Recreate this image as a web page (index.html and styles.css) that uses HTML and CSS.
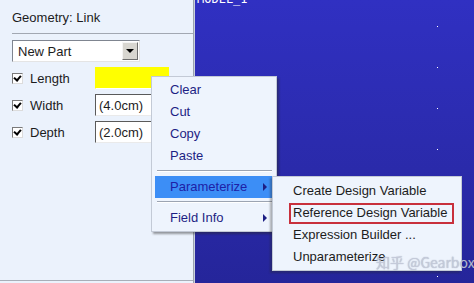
FILE: index.html
```html
<!DOCTYPE html>
<html lang="en">
<head>
   <meta charset="UTF-8">
   <meta name="viewport" content="width=device-width, initial-scale=1.0">
   <link rel="stylesheet" href="styles.css">
</head>
<body>
   <div class="window">
      <div class="panel">
         <div class="title">Geometry: Link</div>
         <div class="select">
            <span class="select-text">New Part</span>
            <span class="select-btn"><span class="down-arrow"></span></span>
         </div>
         <div class="field-row">
            <span class="check"></span>
            <span class="field-label">Length</span>
            <span class="field-input yellow"></span>
         </div>
         <div class="field-row">
            <span class="check"></span>
            <span class="field-label">Width</span>
            <span class="field-input">(4.0cm)</span>
         </div>
         <div class="field-row">
            <span class="check"></span>
            <span class="field-label">Depth</span>
            <span class="field-input">(2.0cm)</span>
         </div>
         <div class="panel-foot"></div>
      </div>
      <div class="canvas">
         <div class="model-name">MODEL_1</div>
         <span class="dot" style="top: 26px"></span>
         <span class="dot" style="top: 67px"></span>
         <span class="dot" style="top: 108px"></span>
         <span class="dot" style="top: 149px"></span>
         <span class="dot" style="top: 276px"></span>
      </div>
   </div>

   <div class="menu context-menu">
      <div class="menu-item">Clear</div>
      <div class="menu-item">Cut</div>
      <div class="menu-item">Copy</div>
      <div class="menu-item">Paste</div>
      <div class="menu-sep"></div>
      <div class="menu-item active">Parameterize <span class="sub-arrow"></span></div>
      <div class="menu-sep"></div>
      <div class="menu-item">Field Info <span class="sub-arrow"></span></div>
   </div>

   <div class="menu sub-menu">
      <div class="menu-item">Create Design Variable</div>
      <div class="menu-item marked">Reference Design Variable</div>
      <div class="menu-item">Expression Builder ...</div>
      <div class="menu-item">Unparameterize</div>
   </div>

   <div class="watermark">知乎 @Gearbox</div>
</body>
</html>
```

FILE: styles.css
```css
body {
   margin: 0;
   font-family: "Liberation Sans", Arial, sans-serif;
   font-size: 13px;
   color: #1c1c1c;
   overflow: hidden;
}
.window {
   display: flex;
   width: 474px;
   height: 283px;
}
.panel {
   width: 193px;
   background-color: #ebf2fc;
   border-right: 1px solid #9ba3b0;
   display: flex;
   flex-direction: column;
}
.title {
   height: 33px;
   line-height: 35px;
   margin-left: 12px;
   border-bottom: 1px solid #a2a8b2;
}
.select {
   display: flex;
   align-items: center;
   justify-content: space-between;
   width: 124px;
   height: 18px;
   margin: 6px 0 0 12px;
   padding: 1px;
   background-color: #fff;
   border: 1px solid #7f8590;
   border-right-color: #e4e4e4;
   border-bottom-color: #e4e4e4;
}
.select-text {
   padding-left: 4px;
}
.select-btn {
   display: flex;
   align-items: center;
   justify-content: center;
   width: 14px;
   height: 16px;
   background-color: #d8d6d0;
   border: 1px solid #f4f4f4;
   border-right-color: #6e6e6e;
   border-bottom-color: #6e6e6e;
}
.down-arrow {
   width: 0;
   height: 0;
   border-left: 4px solid transparent;
   border-right: 4px solid transparent;
   border-top: 4px solid #000;
}
.field-row {
   display: flex;
   align-items: center;
   height: 22px;
   margin-top: 5px;
   padding-left: 12px;
}
.check {
   position: relative;
   width: 9px;
   height: 9px;
   background-color: #fff;
   border: 1px solid #7a7a7a;
   border-right-color: #dcdcdc;
   border-bottom-color: #dcdcdc;
}
.check::after {
   content: "";
   position: absolute;
   left: 2px;
   top: 0px;
   width: 3px;
   height: 5px;
   border-right: 2px solid #000;
   border-bottom: 2px solid #000;
   transform: rotate(40deg);
}
.field-label {
   width: 65px;
   padding-left: 7px;
}
.field-input {
   display: flex;
   align-items: center;
   width: 69px;
   height: 20px;
   padding-left: 3px;
   background-color: #fff;
   border-top: 1px solid #5a5a5a;
   border-left: 1px solid #5a5a5a;
   border-right: 1px solid #eaeaea;
   border-bottom: 1px solid #eaeaea;
}
.field-input.yellow {
   background-color: #ffff00;
   border-color: #ffff00;
   border-bottom-color: #ffffff;
}
.panel-foot {
   margin-top: auto;
   margin-bottom: 2px;
   border-bottom: 1px solid #a8aeb8;
}
.canvas {
   flex: 1;
   position: relative;
   background: linear-gradient(#3030c2, #2a2aaa 60%, #25259a);
   border-left: 1px solid #c9d0dc;
}
.model-name {
   margin-top: -8px;
   padding-left: 2px;
   font-family: "DejaVu Sans Mono", monospace;
   font-size: 12px;
   color: #ffffff;
}
.dot {
   position: absolute;
   left: 242px;
   width: 1px;
   height: 1px;
   background-color: #ffffff;
}
.watermark {
   position: absolute;
   left: 376px;
   top: 252px;
   font-family: "Noto Sans CJK SC", sans-serif;
   font-size: 14px;
   color: rgba(200, 206, 222, 0.85);
   text-shadow: 0 0 1px rgba(90, 96, 120, 0.5);
   z-index: 3;
   white-space: nowrap;
}
.menu {
   position: absolute;
   background-color: #eef4fd;
   border: 1px solid #c3cad6;
   box-shadow: 2px 2px 2px rgba(40, 40, 40, 0.45);
   z-index: 2;
}
.context-menu {
   left: 151px;
   top: 76px;
   width: 120px;
   padding: 2px;
   color: #1d1f84;
}
.sub-menu {
   left: 272px;
   top: 176px;
   width: 188px;
   padding: 3px 0 2px 0;
   color: #1c1c1c;
   box-shadow: -2px 2px 2px rgba(40, 40, 40, 0.35);
}
.menu-item {
   position: relative;
   height: 22px;
   line-height: 22px;
   padding-left: 15px;
   margin-left: 1px;
   white-space: nowrap;
}
.sub-menu .menu-item {
   padding-left: 19px;
}
.menu-item.active {
   background-color: #3c8ef6;
   color: #1e21a6;
}
.menu-item.marked::before {
   content: "";
   position: absolute;
   left: 15px;
   top: 1px;
   width: 161px;
   height: 17px;
   border: 2px solid #c8303c;
}
.sub-arrow {
   position: absolute;
   right: 7px;
   top: 7px;
   width: 0;
   height: 0;
   border-top: 4px solid transparent;
   border-bottom: 4px solid transparent;
   border-left: 4px solid #1d1f84;
}
.menu-sep {
   height: 9px;
   margin: 0 2px 0 3px;
   background: linear-gradient(transparent 3px, #9ca4b2 3px, #9ca4b2 4px, #ffffff 4px, #ffffff 5px, transparent 5px);
}
```
